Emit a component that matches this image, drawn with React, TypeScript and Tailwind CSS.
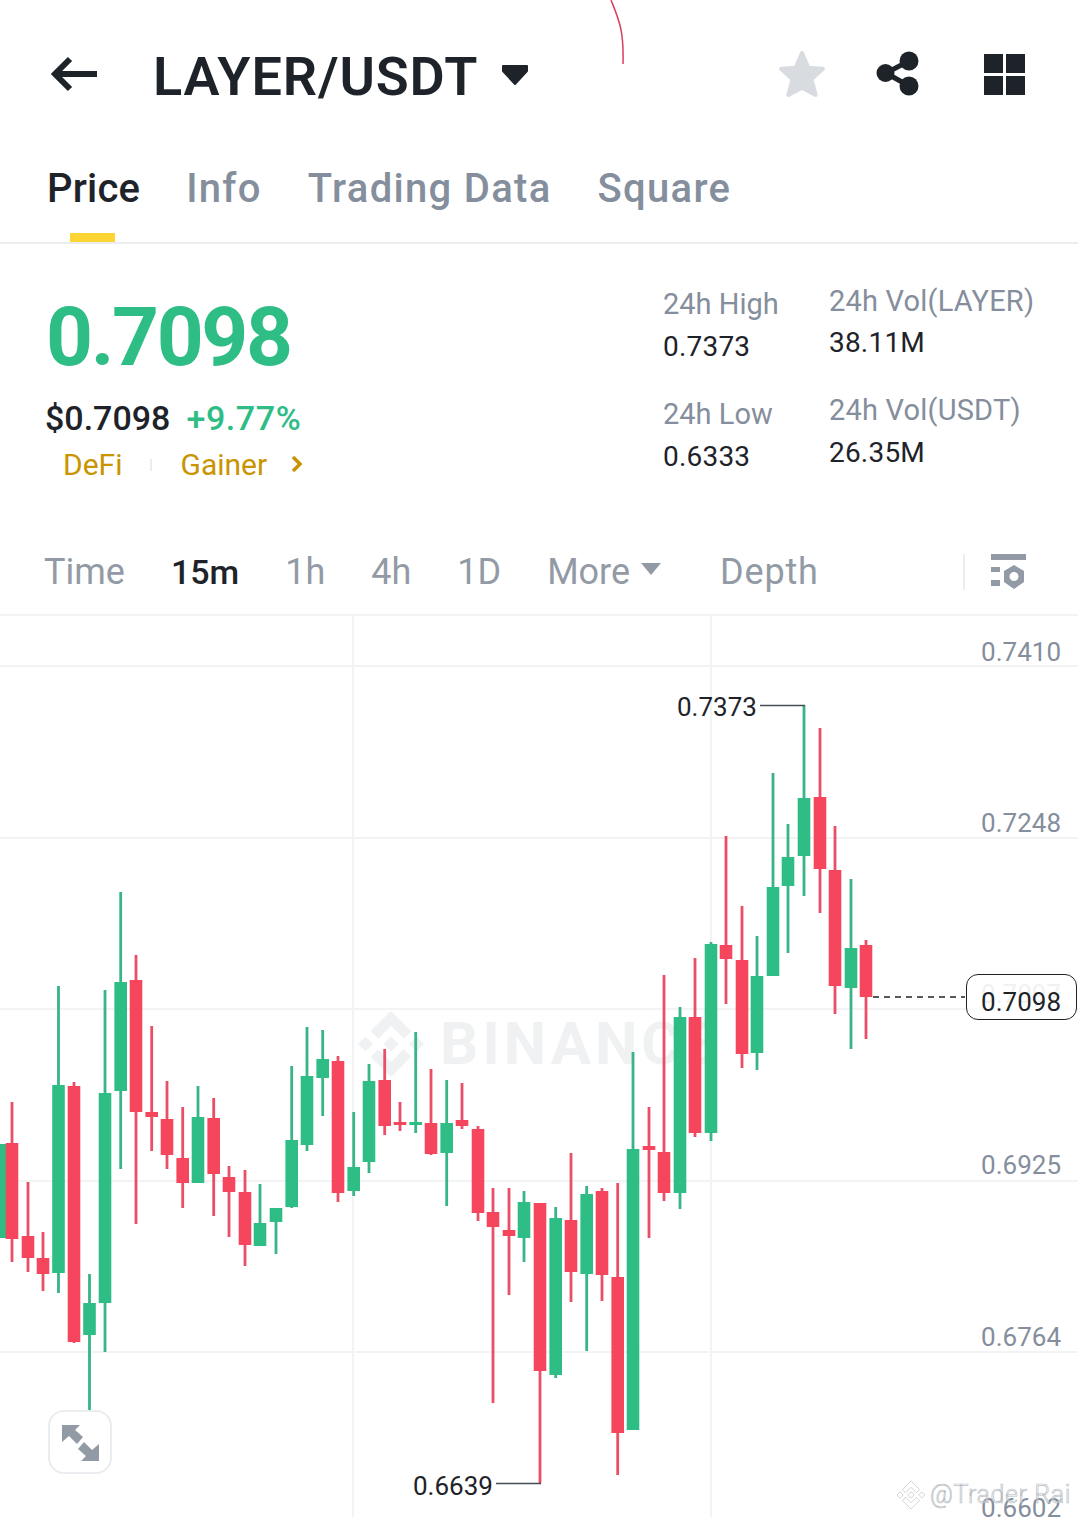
import React from 'react'

type Candle = [number, number, number, number, number, 'g' | 'r']

// x, wick top, body top, body bottom, wick bottom, colour
const candles: Candle[] = [
  [0, 1144, 1144, 1238, 1238, 'g'],
  [12, 1102, 1143, 1239, 1262, 'r'],
  [28, 1182, 1236, 1258, 1272, 'r'],
  [43, 1232, 1258, 1274, 1291, 'r'],
  [58.5, 986, 1085, 1273, 1293, 'g'],
  [74, 1082, 1086, 1342, 1343, 'r'],
  [89.5, 1274, 1303, 1335, 1412, 'g'],
  [105, 990, 1093, 1303, 1352, 'g'],
  [120.7, 892, 982, 1091, 1169, 'g'],
  [136, 955, 980, 1112, 1224, 'r'],
  [151.7, 1026, 1112, 1117, 1151, 'r'],
  [167, 1081, 1119, 1155, 1169, 'r'],
  [182.7, 1107, 1158, 1183, 1208, 'r'],
  [198, 1086, 1117, 1183, 1183, 'g'],
  [213.7, 1098, 1118, 1174, 1216, 'r'],
  [229, 1166, 1177, 1192, 1237, 'r'],
  [245, 1170, 1192, 1245, 1266, 'r'],
  [260, 1184, 1223, 1246, 1246, 'g'],
  [276, 1208, 1208, 1222, 1254, 'g'],
  [291.7, 1066, 1140, 1207, 1208, 'g'],
  [307, 1027, 1076, 1145, 1151, 'g'],
  [322.7, 1030, 1059, 1078, 1116, 'g'],
  [338, 1056, 1061, 1193, 1202, 'r'],
  [353.7, 1112, 1167, 1191, 1196, 'g'],
  [369, 1064, 1081, 1162, 1173, 'g'],
  [384.7, 1049, 1080, 1126, 1135, 'r'],
  [400, 1102, 1122, 1125, 1131, 'r'],
  [415.7, 1032, 1122, 1125, 1133, 'g'],
  [431, 1069, 1123, 1154, 1155, 'r'],
  [446.7, 1080, 1123, 1153, 1206, 'g'],
  [462, 1083, 1120, 1126, 1129, 'r'],
  [478, 1126, 1129, 1213, 1221, 'r'],
  [493, 1188, 1212, 1227, 1403, 'r'],
  [509, 1188, 1230, 1236, 1295, 'r'],
  [524, 1191, 1202, 1238, 1262, 'g'],
  [540, 1203, 1203, 1371, 1483, 'r'],
  [555.7, 1207, 1218, 1375, 1378, 'g'],
  [571, 1153, 1220, 1272, 1302, 'r'],
  [586.7, 1186, 1194, 1274, 1351, 'g'],
  [602, 1188, 1191, 1275, 1301, 'r'],
  [617.7, 1183, 1277, 1433, 1475, 'r'],
  [633, 1052, 1149, 1430, 1430, 'g'],
  [649, 1107, 1146, 1150, 1238, 'r'],
  [664, 975, 1152, 1193, 1201, 'r'],
  [680, 1007, 1017, 1193, 1209, 'g'],
  [695, 958, 1017, 1133, 1137, 'r'],
  [711, 942, 944, 1133, 1141, 'g'],
  [726, 836, 945, 959, 1004, 'r'],
  [742, 906, 960, 1054, 1068, 'r'],
  [757, 936, 976, 1053, 1070, 'g'],
  [773, 773, 887, 976, 976, 'g'],
  [788, 824, 857, 886, 953, 'g'],
  [804, 705, 798, 856, 896, 'g'],
  [820, 728, 797, 869, 913, 'r'],
  [835, 826, 870, 986, 1014, 'r'],
  [851, 879, 948, 988, 1049, 'g'],
  [866, 940, 945, 997, 1039, 'r'],
]

const binancePath =
  'M16.624 13.92l2.717 2.716-7.353 7.353-7.352-7.352 2.717-2.717 4.635 4.66 4.636-4.66zm4.637-4.636L24 12l-2.715 2.716L18.568 12l2.693-2.716zm-9.272 0l2.716 2.692-2.717 2.717L9.272 12l2.716-2.692zm-9.273 0L5.41 12l-2.692 2.692L0 12l2.716-2.716zM11.99 0l7.352 7.33-2.717 2.715-4.636-4.636-4.635 4.66-2.717-2.716L11.989 0z'

const axisLabels = [
  { text: '0.7410', cls: 'top-[21px]' },
  { text: '0.7248', cls: 'top-[192px]' },
  { text: '0.7097', cls: 'top-[363px] opacity-50' },
  { text: '0.6925', cls: 'top-[534px]' },
  { text: '0.6764', cls: 'top-[706px]' },
  { text: '0.6602', cls: 'top-[877px]' },
]

function Header() {
  return (
    <div className="relative flex h-[150px] items-center pl-[50px] pr-[53px] pb-[2px]">
      <svg width="48" height="36" viewBox="0 0 48 36" fill="none" className="mr-[55px] shrink-0">
        <path d="M47 18H6M20 3 5 18l15 15" stroke="#1E2329" strokeWidth="6" />
      </svg>
      <span className="mt-[5px] text-[54px] leading-none font-semibold tracking-[0.9px] text-[#1E2329]">LAYER/USDT</span>
      <svg width="30" height="22" viewBox="0 0 30 22" className="ml-[22px] mb-[-1px] shrink-0">
        <path d="M3 2h24v5L15 20 3 7z" fill="#1E2329" stroke="#1E2329" strokeWidth="2" strokeLinejoin="round" />
      </svg>
      <svg width="16" height="66" viewBox="0 0 16 66" fill="none" className="absolute left-[609px] top-0">
        <path d="M2 0C10 20 15 30 14 64" stroke="#D8405A" strokeWidth="1.5" />
      </svg>
      <div className="ml-auto flex items-center">
        <svg width="48" height="48" viewBox="0 0 46 46" className="shrink-0">
          <path d="M23 3 29 17 43 18 32 28 36 43 23 36 10 43 14 28 3 18 17 17z" fill="#D8DCE1" stroke="#D8DCE1" strokeWidth="4" strokeLinejoin="round" />
        </svg>
        <svg width="46" height="46" viewBox="0 0 46 46" fill="none" className="ml-[50px] shrink-0">
          <path d="M33 10 10 22 33 35" stroke="#1E2329" strokeWidth="5" />
          <circle cx="33" cy="10" r="9.5" fill="#1E2329" />
          <circle cx="9.5" cy="22" r="9" fill="#1E2329" />
          <circle cx="33" cy="35" r="9.5" fill="#1E2329" />
        </svg>
        <div className="ml-[62px] grid h-[41px] w-[41px] shrink-0 grid-cols-2 gap-[3px]">
          <div className="bg-[#1E2329]" />
          <div className="bg-[#1E2329]" />
          <div className="bg-[#1E2329]" />
          <div className="bg-[#1E2329]" />
        </div>
      </div>
    </div>
  )
}

function Tabs() {
  return (
    <div className="relative flex h-[94px] gap-[46px] border-b-2 border-[#EAECEF] pl-[47px] pt-[15px] text-[40px] leading-[48px] font-medium tracking-[1.3px] text-[#848E9C]">
      <span className="tracking-[0.2px] text-[#1E2329]">Price</span>
      <span>Info</span>
      <span>Trading Data</span>
      <span>Square</span>
      <div className="absolute bottom-0 left-[70px] h-[9px] w-[45px] bg-[#FCD535]" />
    </div>
  )
}

function Stats() {
  return (
    <div className="flex h-[286px] pl-[45px]">
      <div className="w-[618px] shrink-0">
        <div className="mt-[47px] pl-[1px] text-[82px] leading-[92px] font-bold tracking-[-2.4px] text-[#2EBD85]">0.7098</div>
        <div className="mt-[13px] flex items-center gap-[16px] text-[34px] leading-[44px] font-medium">
          <span className="text-[#1E2329]">$0.7098</span>
          <span className="tracking-[0.6px] text-[#2EBD85]">+9.77%</span>
        </div>
        <div className="mt-[7px] flex items-center pl-[18px] text-[30px] leading-[36px] text-[#C99400]">
          <span>DeFi</span>
          <div className="ml-[28px] h-[12px] w-[2px] bg-[#EAECEF]" />
          <span className="ml-[28px]">Gainer</span>
          <svg width="14" height="18" viewBox="0 0 14 18" fill="none" className="ml-[23px] mb-[3px]">
            <path d="M3 2l7 7-7 7" stroke="#C99400" strokeWidth="3.5" />
          </svg>
        </div>
      </div>
      <div className="w-[166px] shrink-0 pt-[42px]">
        <div className="text-[29px] leading-[36px] text-[#848E9C]">24h High</div>
        <div className="mt-[7px] text-[28px] leading-[36px] tracking-[0.2px] text-[#1E2329]">0.7373</div>
        <div className="mt-[31px] text-[29px] leading-[36px] text-[#848E9C]">24h Low</div>
        <div className="mt-[7px] text-[28px] leading-[36px] tracking-[0.2px] text-[#1E2329]">0.6333</div>
      </div>
      <div className="pt-[39px]">
        <div className="text-[29px] leading-[36px] tracking-[0.2px] text-[#848E9C]">24h Vol(LAYER)</div>
        <div className="mt-[6px] text-[28px] leading-[36px] tracking-[0.2px] text-[#1E2329]">38.11M</div>
        <div className="mt-[31px] text-[29px] leading-[36px] tracking-[0.2px] text-[#848E9C]">24h Vol(USDT)</div>
        <div className="mt-[7px] text-[28px] leading-[36px] tracking-[0.2px] text-[#1E2329]">26.35M</div>
      </div>
    </div>
  )
}

function Intervals() {
  return (
    <div className="flex h-[86px] items-center border-b-2 border-[#F3F4F6] pl-[44px] text-[36px] leading-[44px] text-[#929AA5]">
      <div className="flex items-center gap-[46px]">
        <span>Time</span>
        <span className="text-[34px] font-medium text-[#1E2329]">15m</span>
        <span>1h</span>
        <span>4h</span>
        <span>1D</span>
        <span>More</span>
      </div>
      <svg width="22" height="14" viewBox="0 0 22 14" className="ml-[10px] mb-[6px] shrink-0">
        <path d="M1 1h20L11 13z" fill="#929AA5" />
      </svg>
      <span className="ml-[58px] tracking-[0.8px]">Depth</span>
      <div className="ml-[144px] h-[36px] w-[2px] bg-[#EAECEF]" />
      <svg width="38" height="38" viewBox="0 0 38 38" className="ml-[25px] shrink-0">
        <rect x="1" y="1" width="35" height="6" fill="#929AA5" />
        <rect x="1" y="14" width="9" height="5" fill="#929AA5" />
        <rect x="1" y="27" width="9" height="6" fill="#929AA5" />
        <path fillRule="evenodd" d="M24 12l10 6v11l-10 7-10-7V18zM24 19a4.5 4.5 0 1 0 0 9 4.5 4.5 0 0 0 0-9z" fill="#929AA5" />
      </svg>
    </div>
  )
}

function Chart() {
  return (
    <div className="relative h-[901px] overflow-hidden">
      {/* faint logo behind the candles */}
      <div className="absolute left-[358px] top-[395px] flex items-center gap-[16px]">
        <svg width="66" height="66" viewBox="0 0 24 24">
          <path d={binancePath} fill="#EFF1F2" />
        </svg>
        <span className="text-[60px] leading-none font-bold tracking-[4px] text-[#EFF1F2]">BINANCE</span>
      </div>

      <svg width="1078" height="901" viewBox="0 616 1078 901" className="absolute left-0 top-0">
        {[666, 838, 1009, 1181, 1352].map((y) => (
          <rect key={y} x="0" y={y - 1} width="1078" height="2" fill="#F2F3F5" />
        ))}
        {[353, 711].map((x) => (
          <rect key={x} x={x - 1} y="616" width="2" height="901" fill="#F2F3F5" />
        ))}
        {candles.map(([x, high, top, bottom, low, side]) => {
          const fill = side === 'g' ? '#2EBD85' : '#F6465D'
          return (
            <g key={x}>
              <rect x={x - 1.4} y={high} width="2.8" height={low - high} fill={side === 'g' ? '#38B487' : '#E94F66'} />
              <rect x={x - 6.3} y={top} width="12.6" height={Math.max(bottom - top, 3)} fill={fill} />
            </g>
          )
        })}
        <path d="M760 705.5H805M496 1483.5H541" stroke="#474D57" strokeWidth="1.5" fill="none" />
        <path d="M873 997H965" stroke="#1E2329" strokeWidth="1.5" strokeDasharray="6 5" fill="none" />
      </svg>

      {axisLabels.map((l) => (
        <span key={l.text} className={`absolute right-[17px] text-[26px] leading-[30px] text-[#848E9C] ${l.cls}`}>
          {l.text}
        </span>
      ))}

      <span className="absolute left-[677px] top-[76px] text-[26px] leading-[30px] text-[#1E2329]">0.7373</span>
      <span className="absolute left-[413px] top-[855px] text-[26px] leading-[30px] text-[#1E2329]">0.6639</span>

      <div className="absolute left-[966px] top-[358px] flex h-[46px] w-[111px] items-center justify-end rounded-[12px] border-[1.5px] border-[#1E2329] bg-white/75 pr-[15px] pt-[9px] text-[26px] leading-[30px] text-[#1E2329]">
        0.7098
      </div>

      <div className="absolute left-[48px] top-[794px] h-[64px] w-[64px] rounded-[16px] border-2 border-[#EAECEF] bg-white/90">
        <svg width="60" height="60" viewBox="0 0 60 60">
          <path d="M12 13H30L25 18 33 25 27 32 19 24 12 30z" fill="#929AA5" />
          <path d="M49 49H31L36 44 28 37 34 30 42 38 49 32z" fill="#929AA5" />
        </svg>
      </div>

      <div className="absolute left-[897px] top-[864px] flex items-center gap-[5px] whitespace-nowrap">
        <svg width="28" height="28" viewBox="0 0 24 24" className="shrink-0">
          <path d={binancePath} fill="white" stroke="#BFC3C9" strokeWidth="0.6" />
        </svg>
        <span className="text-[25px] leading-[30px] font-light tracking-[0.6px] text-white/30 [-webkit-text-stroke:0.7px_#B7BCC3]">@Trader Rai</span>
      </div>
    </div>
  )
}

export default function App() {
  return (
    <div className="h-[1517px] w-[1078px] overflow-hidden bg-white font-['Roboto',sans-serif]">
      <Header />
      <Tabs />
      <Stats />
      <Intervals />
      <Chart />
    </div>
  )
}
